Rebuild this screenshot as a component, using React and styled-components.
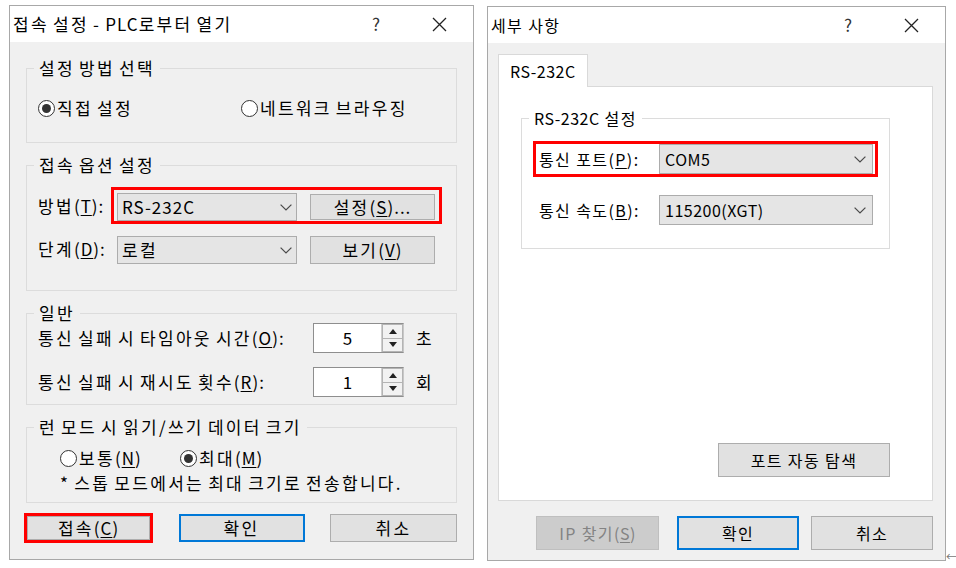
import React from "react";
import styled, { createGlobalStyle, css } from "styled-components";

const GlobalStyle = createGlobalStyle`
  html, body { margin: 0; padding: 0; background: #fff; }
  body { font-family: "Noto Sans CJK KR", "Noto Sans", sans-serif; color: #000; }
  * { box-sizing: border-box; }
`;

const Page = styled.div`
  display: flex;
  align-items: flex-start;
  gap: 13px;
  width: 956px;
  height: 561px;
  padding: 5px 0 0 9px;
`;

const Window = styled.div`
  width: ${(p) => p.$w}px;
  height: 555px;
  flex: none;
  border: 1px solid #a8a8a8;
  background: #f0f0f0;
  display: flex;
  flex-direction: column;
  font-size: ${(p) => p.$fs}px;
  letter-spacing: ${(p) => p.$ls}px;
  word-spacing: ${(p) => p.$ws || 0}px;
  line-height: 20px;
`;

const TitleBar = styled.div`
  height: 36px;
  flex: none;
  background: #fff;
  display: flex;
  align-items: center;
  padding: 0 5px 0 3px;
`;

const TitleText = styled.div`
  flex: 1;
  white-space: nowrap;
`;

const CaptionButton = styled.div`
  width: 58px;
  height: 36px;
  display: flex;
  align-items: center;
  justify-content: center;
  color: #333;
  font-size: 17px;
  letter-spacing: 0;
  margin-right: ${(p) => p.$mr || 0}px;
`;

const LeftBody = styled.div`
  flex: 1;
  display: flex;
  flex-direction: column;
  gap: 12px;
  padding: 16px 16px 0 16px;
`;

const Group = styled.fieldset`
  margin: 0;
  min-width: 0;
  border: 1px solid #dcdcdc;
  padding: ${(p) => p.$pad};
  display: flex;
  flex-direction: column;
  gap: ${(p) => p.$gap || 0}px;
`;

const Legend = styled.legend`
  padding: 0 5px;
  margin-left: -4px;
  line-height: 20px;
`;

const Latin = styled.span`
  letter-spacing: ${(p) => p.$ls ?? 1}px;
`;

const RadioRow = styled.div`
  display: grid;
  grid-template-columns: ${(p) => p.$col}px auto;
  padding-left: ${(p) => p.$indent || 0}px;
  height: 20px;
  align-items: center;
`;

const RadioLabel = styled.label`
  display: inline-flex;
  align-items: center;
  gap: 2px;
  white-space: nowrap;
`;

const RadioDot = styled.span`
  width: 17px;
  height: 17px;
  flex: none;
  border-radius: 50%;
  border: 1px solid #333;
  background: #fff;
  display: flex;
  align-items: center;
  justify-content: center;
  &::after {
    content: "";
    width: 9px;
    height: 9px;
    border-radius: 50%;
    background: #333;
    display: ${(p) => (p.$on ? "block" : "none")};
  }
`;

const Mnemonic = styled.u`
  text-decoration: underline;
  text-decoration-thickness: 1px;
  text-underline-offset: 2px;
`;

const FieldRow = styled.div`
  display: flex;
  align-items: center;
`;

const FieldLabel = styled.span`
  width: ${(p) => p.$w}px;
  flex: none;
  white-space: nowrap;
`;

const Mark = styled.div`
  display: flex;
  align-items: center;
  gap: ${(p) => p.$gap || 0}px;
  border: 3px solid ${(p) => (p.$on ? "#ff0000" : "transparent")};
  padding: ${(p) => p.$pad || "0"};
  flex: none;
`;

const Combo = styled.div`
  width: ${(p) => p.$w}px;
  height: ${(p) => p.$h}px;
  flex: none;
  background: #e5e5e5;
  border: 1px solid #acacac;
  display: flex;
  align-items: center;
  justify-content: space-between;
  padding: 0 ${(p) => p.$pr}px 0 ${(p) => p.$pl}px;
  white-space: nowrap;
  letter-spacing: ${(p) => p.$ls}px;
`;

const PushButton = styled.button`
  font: inherit;
  letter-spacing: inherit;
  word-spacing: inherit;
  line-height: 20px;
  width: ${(p) => p.$w}px;
  height: ${(p) => p.$h}px;
  flex: none;
  margin: 0;
  margin-right: ${(p) => p.$mr || 0}px;
  padding: 0;
  background: #e1e1e1;
  border: 1px solid #adadad;
  color: #000;
  white-space: nowrap;
  ${(p) =>
    p.$primary &&
    css`
      border: 2px solid #0078d7;
    `}
  ${(p) =>
    p.$off &&
    css`
      background: #cccccc;
      border-color: #bfbfbf;
      color: #838383;
    `}
`;

const SpinBox = styled.div`
  display: flex;
  height: 30px;
  flex: none;
  border: 1px solid #8e8e8e;
  border-right-color: #c8c8c8;
  background: #fff;
`;

const SpinValue = styled.div`
  width: 67px;
  display: flex;
  align-items: center;
  justify-content: center;
  letter-spacing: 0;
`;

const SpinButtons = styled.div`
  width: 22px;
  display: flex;
  flex-direction: column;
  border-left: 1px solid #cfcfcf;
`;

const SpinHalf = styled.div`
  flex: 1;
  display: flex;
  align-items: center;
  justify-content: center;
  background: #f2f2f2;
  border: 1px solid #b4b4b4;
  & + & {
    border-top: none;
  }
`;

const Unit = styled.span`
  margin-left: 12px;
`;

const NoteText = styled.div`
  padding-left: 22px;
  height: 20px;
  white-space: nowrap;
`;

const ButtonRow = styled.div`
  display: flex;
  align-items: center;
  justify-content: ${(p) => p.$justify};
  margin: ${(p) => p.$margin};
`;

const RightWrap = styled.div`
  display: flex;
  align-items: flex-end;
  align-self: stretch;
`;

const RightBody = styled.div`
  flex: 1;
  display: flex;
  flex-direction: column;
  padding: 11px 12px 10px 10px;
`;

const TabStrip = styled.div`
  display: flex;
`;

const Tab = styled.div`
  width: 90px;
  height: 33px;
  padding-left: 11px;
  display: flex;
  align-items: center;
  background: #fff;
  border: 1px solid #d9d9d9;
  border-bottom: none;
  margin-bottom: -1px;
  position: relative;
  z-index: 1;
  letter-spacing: 0.5px;
`;

const TabPanel = styled.div`
  flex: 1;
  background: #fff;
  border: 1px solid #d9d9d9;
  padding: 21px 42px 23px 22px;
  display: flex;
  flex-direction: column;
`;

const Spacer = styled.div`
  flex: 1;
`;

const ReturnMark = styled.span`
  font-size: 11px;
  line-height: 10px;
  color: #777;
  letter-spacing: 0;
`;

const Chevron = () => (
  <svg width="12" height="7" viewBox="0 0 12 7">
    <polyline points="0.6,0.6 6,6 11.4,0.6" fill="none" stroke="#4a4a4a" strokeWidth="1.2" />
  </svg>
);

const CloseGlyph = () => (
  <svg width="15" height="15" viewBox="0 0 15 15">
    <path d="M1 1 L14 14 M14 1 L1 14" stroke="#222" strokeWidth="1.3" fill="none" />
  </svg>
);

const Triangle = ({ up }) => (
  <svg width="8" height="5" viewBox="0 0 8 5">
    <polygon points={up ? "0,5 8,5 4,0" : "0,0 8,0 4,5"} fill="#222" />
  </svg>
);

/* "(K)" access-key suffix, with the key letter underlined */
const Accel = ({ k, tail = "", ls }) => (
  <Latin $ls={ls}>
    (<Mnemonic>{k}</Mnemonic>){tail}
  </Latin>
);

const Caption = ({ children }) => (
  <TitleBar>
    <TitleText>{children}</TitleText>
    <CaptionButton $mr={5}>?</CaptionButton>
    <CaptionButton>
      <CloseGlyph />
    </CaptionButton>
  </TitleBar>
);

const Radio = ({ on, children }) => (
  <RadioLabel>
    <RadioDot $on={on} />
    <span>{children}</span>
  </RadioLabel>
);

const Spinner = ({ value }) => (
  <SpinBox>
    <SpinValue>{value}</SpinValue>
    <SpinButtons>
      <SpinHalf>
        <Triangle up />
      </SpinHalf>
      <SpinHalf>
        <Triangle />
      </SpinHalf>
    </SpinButtons>
  </SpinBox>
);

const Dropdown = ({ w, h, pl, pr, ls, children }) => (
  <Combo $w={w} $h={h} $pl={pl} $pr={pr} $ls={ls}>
    <span>{children}</span>
    <Chevron />
  </Combo>
);

function ConnectDialog() {
  return (
    <Window $w={465} $fs={17} $ls={2.3} $ws={-2}>
      <Caption>
        접속 설정 - <Latin>PLC</Latin>로부터 열기
      </Caption>
      <LeftBody>
        <Group $pad="20px 11px 24px 11px">
          <Legend>설정 방법 선택</Legend>
          <RadioRow $col={203}>
            <Radio on>직접 설정</Radio>
            <Radio>네트워크 브라우징</Radio>
          </RadioRow>
        </Group>

        <Group $pad="12px 11px 23px 11px" $gap={6}>
          <Legend>접속 옵션 설정</Legend>
          <FieldRow>
            <FieldLabel $w={73}>
              방법<Accel k="T" tail=":" />
            </FieldLabel>
            <Mark $on $gap={13} $pad="3px 4px 0 3px">
              <Dropdown w={180} h={28} pl={4} pr={4} ls={1}>
                RS-232C
              </Dropdown>
              <PushButton $w={125} $h={26}>
                설정<Accel k="S" tail="..." />
              </PushButton>
            </Mark>
          </FieldRow>
          <FieldRow>
            <FieldLabel $w={73}>
              단계<Accel k="D" tail=":" />
            </FieldLabel>
            <Mark $gap={13} $pad="3px 4px 0 3px">
              <Dropdown w={180} h={28} pl={4} pr={4} ls={2.3}>
                로컬
              </Dropdown>
              <PushButton $w={125} $h={28}>
                보기<Accel k="V" />
              </PushButton>
            </Mark>
          </FieldRow>
        </Group>

        <Group $pad="0 11px 7px 11px" $gap={14}>
          <Legend>일반</Legend>
          <FieldRow>
            <FieldLabel $w={275}>
              통신 실패 시 타임아웃 시간<Accel k="O" tail=":" />
            </FieldLabel>
            <Spinner value="5" />
            <Unit>초</Unit>
          </FieldRow>
          <FieldRow>
            <FieldLabel $w={275}>
              통신 실패 시 재시도 횟수<Accel k="R" tail=":" />
            </FieldLabel>
            <Spinner value="1" />
            <Unit>회</Unit>
          </FieldRow>
        </Group>

        <Group $pad="11px 11px 9px 11px" $gap={5}>
          <Legend>런 모드 시 읽기/쓰기 데이터 크기</Legend>
          <RadioRow $col={120} $indent={22}>
            <Radio>
              보통<Accel k="N" />
            </Radio>
            <Radio on>
              최대<Accel k="M" />
            </Radio>
          </RadioRow>
          <NoteText>* 스톱 모드에서는 최대 크기로 전송합니다.</NoteText>
        </Group>

        <ButtonRow $justify="space-between" $margin="-2px 0 0 -2px">
          <Mark $on>
            <PushButton $w={123} $h={24}>
              접속<Accel k="C" />
            </PushButton>
          </Mark>
          <PushButton $w={126} $h={28} $primary>
            확인
          </PushButton>
          <PushButton $w={127} $h={28}>
            취소
          </PushButton>
        </ButtonRow>
      </LeftBody>
    </Window>
  );
}

function DetailDialog() {
  return (
    <Window $w={459} $fs={16} $ls={1.4}>
      <Caption>세부 사항</Caption>
      <RightBody>
        <TabStrip>
          <Tab>RS-232C</Tab>
        </TabStrip>
        <TabPanel>
          <Group $pad="13px 11px 20px 11px" $gap={15}>
            <Legend>
              <Latin $ls={0.5}>RS-232C</Latin> 설정
            </Legend>
            <Mark $on $pad="0 1px 0 3px">
              <FieldLabel $w={120}>
                통신 포트<Accel k="P" tail=":" ls={1.4} />
              </FieldLabel>
              <Dropdown w={214} h={30} pl={5} pr={6} ls={0.5}>
                COM5
              </Dropdown>
            </Mark>
            <Mark $pad="0 1px 0 3px">
              <FieldLabel $w={120}>
                통신 속도<Accel k="B" tail=":" ls={1.4} />
              </FieldLabel>
              <Dropdown w={214} h={30} pl={5} pr={6} ls={0.5}>
                115200(XGT)
              </Dropdown>
            </Mark>
          </Group>
          <Spacer />
          <ButtonRow $justify="flex-end" $margin="0">
            <PushButton $w={172} $h={34}>
              포트 자동 탐색
            </PushButton>
          </ButtonRow>
        </TabPanel>
        <ButtonRow $justify="flex-end" $margin="15px 0 0 0">
          <PushButton $w={123} $h={34} $mr={18} $off>
            IP 찾기<Accel k="S" ls={0.5} />
          </PushButton>
          <PushButton $w={122} $h={34} $mr={12} $primary>
            확인
          </PushButton>
          <PushButton $w={122} $h={34}>
            취소
          </PushButton>
        </ButtonRow>
      </RightBody>
    </Window>
  );
}

export default function App() {
  return (
    <>
      <GlobalStyle />
      <Page>
        <ConnectDialog />
        <RightWrap>
          <DetailDialog />
          <ReturnMark>←</ReturnMark>
        </RightWrap>
      </Page>
    </>
  );
}
